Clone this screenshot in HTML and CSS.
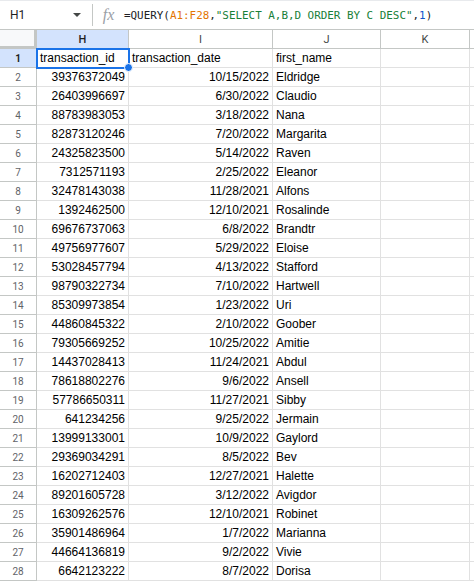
FILE: index.html
```html
<!DOCTYPE html>
<html>
<head>
<meta charset="utf-8">
<link rel="stylesheet" href="styles.css">
</head>
<body>
<div class="fbar">
  <div class="namebox"><span class="ref">H1</span><span class="caret"></span></div>
  <div class="sep"></div>
  <div class="fx">fx</div>
  <div class="formula"><span class="d">=QUERY(</span><span class="o">A1:F28</span><span class="d">,</span><span class="g">"SELECT A,B,D ORDER BY C DESC"</span><span class="d">,</span><span class="b">1</span><span class="d">)</span></div>
</div>
<div class="grid" id="grid">
  <div class="corner"></div>
  <div class="ch sel">H</div>
  <div class="ch">I</div>
  <div class="ch">J</div>
  <div class="ch">K</div>
  <div class="ch last"></div>
</div>
<script src="app.js"></script>
</body>
</html>
```

FILE: app.js
```js
const rows = [
  ["transaction_id","transaction_date","first_name"],
  ["39376372049","10/15/2022","Eldridge"],
  ["26403996697","6/30/2022","Claudio"],
  ["88783983053","3/18/2022","Nana"],
  ["82873120246","7/20/2022","Margarita"],
  ["24325823500","5/14/2022","Raven"],
  ["7312571193","2/25/2022","Eleanor"],
  ["32478143038","11/28/2021","Alfons"],
  ["1392462500","12/10/2021","Rosalinde"],
  ["69676737063","6/8/2022","Brandtr"],
  ["49756977607","5/29/2022","Eloise"],
  ["53028457794","4/13/2022","Stafford"],
  ["98790322734","7/10/2022","Hartwell"],
  ["85309973854","1/23/2022","Uri"],
  ["44860845322","2/10/2022","Goober"],
  ["79305669252","10/25/2022","Amitie"],
  ["14437028413","11/24/2021","Abdul"],
  ["78618802276","9/6/2022","Ansell"],
  ["57786650311","11/27/2021","Sibby"],
  ["641234256","9/25/2022","Jermain"],
  ["13999133001","10/9/2022","Gaylord"],
  ["29369034291","8/5/2022","Bev"],
  ["16202712403","12/27/2021","Halette"],
  ["89201605728","3/12/2022","Avigdor"],
  ["16309262576","12/10/2021","Robinet"],
  ["35901486964","1/7/2022","Marianna"],
  ["44664136819","9/2/2022","Vivie"],
  ["6642123222","8/7/2022","Dorisa"]
];
const g = document.getElementById("grid");
rows.forEach((r, i) => {
  const first = i === 0;
  const rh = document.createElement("div");
  rh.className = "rh" + (first ? " sel" : "");
  rh.textContent = i + 1;
  g.appendChild(rh);
  r.forEach((v, j) => {
    const c = document.createElement("div");
    c.className = "cell" + (!first && j < 2 ? " num" : "") + (first && j === 0 ? " active" : "");
    c.textContent = v;
    if (first && j === 0) {
      const h = document.createElement("span");
      h.className = "handle";
      c.appendChild(h);
    }
    g.appendChild(c);
  });
  const k = document.createElement("div");
  k.className = "cell";
  g.appendChild(k);
  const l = document.createElement("div");
  l.className = "cell last";
  g.appendChild(l);
});
```

FILE: styles.css
```css
* { box-sizing: border-box; }
html, body { margin: 0; padding: 0; background: #fff; overflow: hidden; }
body { font-family: "Liberation Sans", Arial, sans-serif; color: #000; }

.fbar {
  height: 30px;
  display: flex;
  align-items: center;
  border-top: 1px solid #e8eaed;
  border-bottom: 1px solid #c4c7c5;
  background: #fff;
}
.namebox {
  width: 92px;
  display: flex;
  align-items: center;
  padding-left: 10px;
  font-family: Roboto, "Liberation Sans", sans-serif;
  font-size: 12px;
  color: #1f1f1f;
}
.ref { flex: 1; }
.caret {
  width: 0; height: 0;
  border-left: 4px solid transparent;
  border-right: 4px solid transparent;
  border-top: 4px solid #444746;
  margin-right: 11px;
}
.sep { width: 1px; height: 22px; background: #c4c7c5; }
.fx {
  width: 31px;
  text-align: center;
  font-family: "Liberation Serif", serif;
  font-style: italic;
  font-size: 16px;
  color: #9aa0a6;
}
.formula {
  font-family: "DejaVu Sans Mono", "Liberation Mono", monospace;
  font-size: 10.9px;
  white-space: nowrap;
}
.formula .d { color: #202124; }
.formula .o { color: #e37400; }
.formula .g { color: #188038; }
.formula .b { color: #1155cc; }

.grid {
  display: grid;
  grid-template-columns: 37px 92px 144px 108px 89px 1fr;
  grid-auto-rows: 19px;
}
.corner {
  background: #f8f9fa;
  border-right: 3px solid #c4c7c5;
  border-bottom: 3px solid #c4c7c5;
}
.ch {
  background: #fff;
  border-right: 1px solid #c4c7c5;
  border-bottom: 1px solid #c4c7c5;
  font-family: Roboto, "Liberation Sans", sans-serif;
  font-size: 11px;
  color: #444746;
  display: flex;
  align-items: center;
  justify-content: center;
}
.ch.sel { background: #d3e3fd; font-weight: 500; color: #1f1f1f; }
.rh {
  background: #fff;
  border-right: 1px solid #c4c7c5;
  border-bottom: 1px solid #c4c7c5;
  font-family: Roboto, "Liberation Sans", sans-serif;
  font-size: 10px;
  color: #5f6368;
  display: flex;
  align-items: center;
  justify-content: center;
}
.rh.sel { background: #d3e3fd; color: #1f1f1f; font-weight: 700; }
.cell {
  border-right: 1px solid #e1e1e1;
  border-bottom: 1px solid #e1e1e1;
  font-size: 12px;
  line-height: 18px;
  padding: 0 3px;
  white-space: nowrap;
  position: relative;
}
.cell.num { text-align: right; }
.last { border-right: none; }
.active {
  outline: 2px solid #1a73e8;
  outline-offset: -1px;
  z-index: 2;
}
.handle {
  position: absolute;
  right: -5px;
  bottom: -5px;
  width: 9px;
  height: 9px;
  border-radius: 50%;
  background: #1a73e8;
  border: 1px solid #fff;
}
```
